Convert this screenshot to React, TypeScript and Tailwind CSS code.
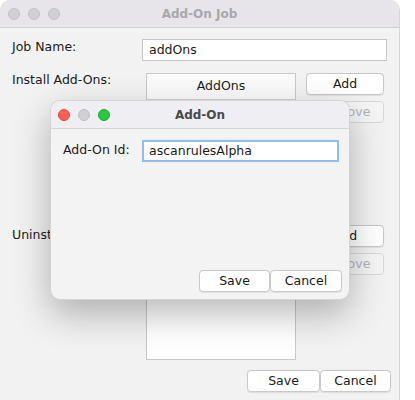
import React from "react";

const font = { fontFamily: '"DejaVu Sans", "Liberation Sans", sans-serif' };

function Lights({ active }: { active: boolean }) {
  if (!active) {
    return (
      <div className="flex gap-[8px]">
        <div className="w-[12px] h-[12px] rounded-full bg-[#d0cfd2] border border-[#c2c1c5]" />
        <div className="w-[12px] h-[12px] rounded-full bg-[#d0cfd2] border border-[#c2c1c5]" />
        <div className="w-[12px] h-[12px] rounded-full bg-[#d0cfd2] border border-[#c2c1c5]" />
      </div>
    );
  }
  return (
    <div className="flex gap-[8px]">
      <div className="w-[12px] h-[12px] rounded-full bg-[#ff5f57] border border-[#e2463f]" />
      <div className="w-[12px] h-[12px] rounded-full bg-[#d0cfd3] border border-[#c0bfc3]" />
      <div className="w-[12px] h-[12px] rounded-full bg-[#28c840] border border-[#1daa2f]" />
    </div>
  );
}

function Btn({ label, w, disabled }: { label: string; w: string; disabled?: boolean }) {
  return (
    <div
      className={`${w} h-[22px] flex items-center justify-center rounded-[4px] border text-[12.5px] leading-none ${
        disabled
          ? "bg-[#f5f5f5] border-[#d8d8d8] text-[#b3b3b3]"
          : "bg-white border-[#c9c9c9] text-[#1a1a1a] shadow-[0_0.5px_1px_rgba(0,0,0,0.08)]"
      }`}
    >
      {label}
    </div>
  );
}

export default function App() {
  return (
    <div className="w-[415px] h-[400px] bg-white overflow-hidden relative" style={font}>
      {/* Outer window */}
      <div className="w-[400px] h-[400px] bg-[#f2f2f2] rounded-t-[10px] border-r border-[#d6d6d6] flex flex-col">
        <div className="h-[28px] bg-[#e7e5e9] rounded-t-[10px] border-b border-[#d2d1d4] flex items-center px-[8px] relative">
          <Lights active={false} />
          <div className="absolute inset-0 flex items-center justify-center text-[12px] font-bold text-[#a9a8ab]">
            Add-On Job
          </div>
        </div>
        <div className="flex flex-col pl-[12px] pr-[12px] text-[12.5px] text-[#1a1a1a]">
          <div className="flex mt-[11px]">
            <div className="w-[130px] leading-[16px]">Job Name:</div>
            <div className="w-[245px] h-[22px] bg-white border border-[#c6c6c6] flex items-center px-[6px]">addOns</div>
          </div>
          <div className="flex mt-[12px]">
            <div className="w-[134px] leading-[16px] -mt-[1px]">Install Add-Ons:</div>
            <div className="w-[150px] h-[142px] bg-white border border-[#c8c8c8] flex flex-col">
              <div className="h-[26px] bg-[#fafafa] border-b border-[#d0d0d0] flex items-center justify-center">AddOns</div>
            </div>
            <div className="flex flex-col gap-[6px] ml-[10px]">
              <Btn label="Add" w="w-[78px]" />
              <Btn label="Remove" w="w-[78px]" disabled />
            </div>
          </div>
          <div className="flex mt-[10px]">
            <div className="w-[134px] leading-[16px] mt-[2px]">Uninstall Add-Ons:</div>
            <div className="w-[150px] h-[135px] bg-white border border-[#c8c8c8] flex flex-col">
              <div className="h-[26px] bg-[#fafafa] border-b border-[#d0d0d0] flex items-center justify-center">AddOns</div>
            </div>
            <div className="flex flex-col gap-[6px] ml-[10px]">
              <Btn label="Add" w="w-[78px]" />
              <Btn label="Remove" w="w-[78px]" disabled />
            </div>
          </div>
          <div className="flex justify-end mt-[10px] mr-[-4px]">
            <Btn label="Save" w="w-[73px]" />
            <Btn label="Cancel" w="w-[71px]" />
          </div>
        </div>
      </div>

      {/* Dialog window */}
      <div className="absolute left-[50px] top-[100px] w-[300px] h-[200px] rounded-[10px] bg-[#f3f3f3] border border-[rgba(0,0,0,0.12)] shadow-[0_14px_36px_rgba(0,0,0,0.28)] flex flex-col overflow-hidden">
        <div className="h-[28px] bg-[#efeef2] border-b border-[#d6d5d9] flex items-center px-[7px] relative">
          <Lights active />
          <div className="absolute inset-0 flex items-center justify-center text-[12px] font-bold text-[#4a4a4a]">
            Add-On
          </div>
        </div>
        <div className="flex-1 flex flex-col px-[7px] text-[12.5px] text-[#1a1a1a]">
          <div className="flex mt-[11px] pl-[5px]">
            <div className="w-[79px] leading-[16px] mt-[2px]">Add-On Id:</div>
            <div className="w-[197px] h-[22px] bg-white border-[2px] border-[#93bbee] flex items-center px-[5px]">
              ascanrulesAlpha
            </div>
          </div>
          <div className="flex-1" />
          <div className="flex justify-end mb-[7px]">
            <Btn label="Save" w="w-[71px]" />
            <Btn label="Cancel" w="w-[72px]" />
          </div>
        </div>
      </div>
    </div>
  );
}
